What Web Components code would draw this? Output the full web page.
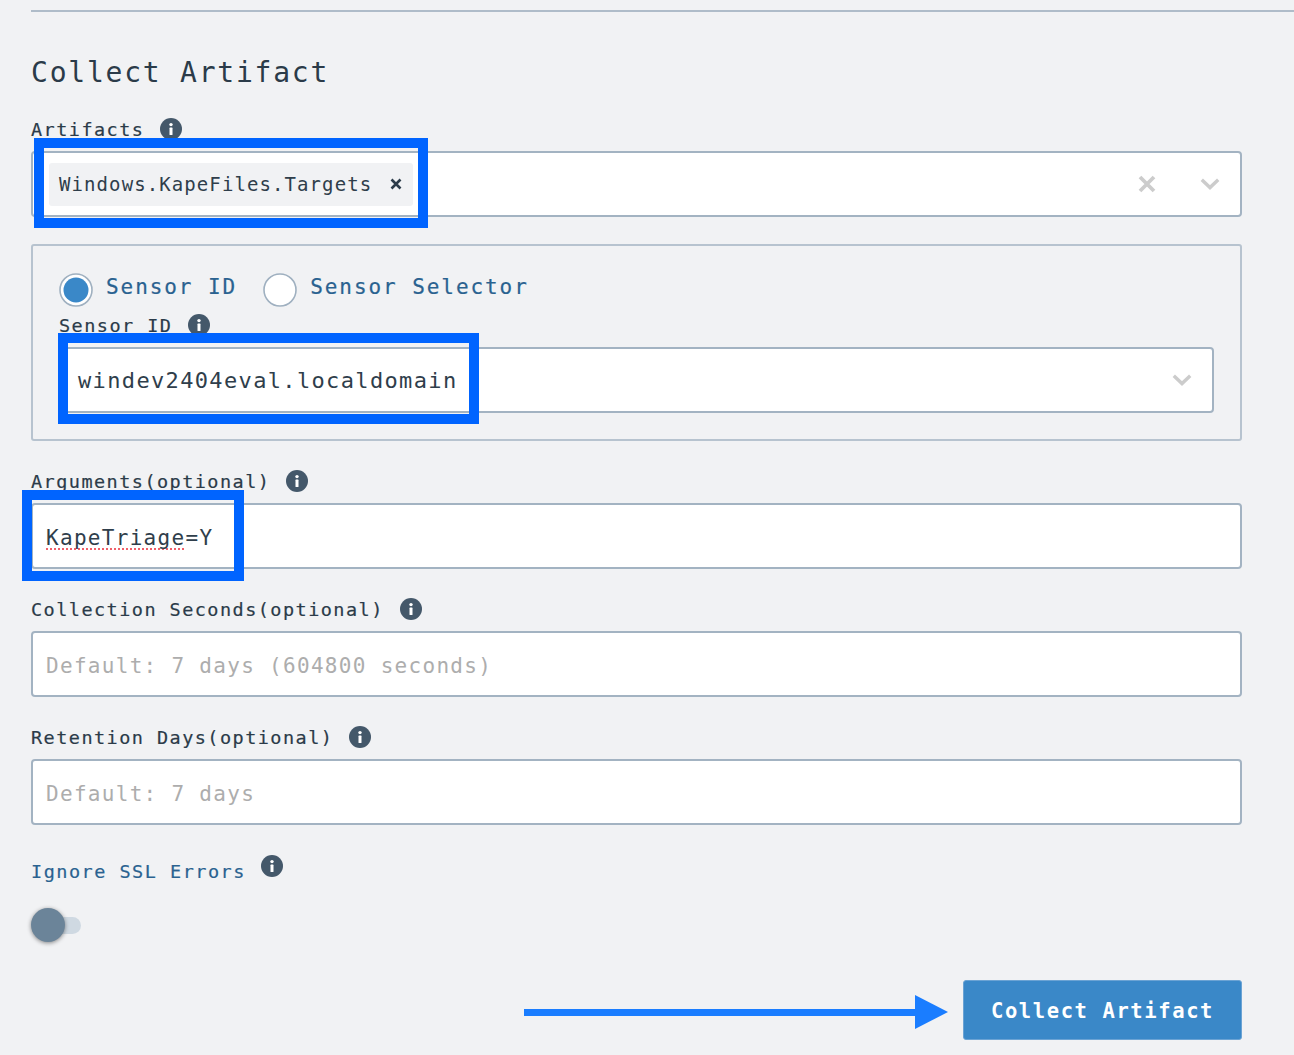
<!DOCTYPE html>
<html>
<head>
<meta charset="utf-8">
<title>Collect Artifact</title>
<style>
    html, body { margin: 0; padding: 0; background: #f1f2f4; }
    body { font-family: "DejaVu Sans Mono", "Liberation Mono", monospace; color: #2b3b49; overflow: hidden; height: 1055px; }
</style>
</head>
<body>
<collect-page>
    <form-field label="Artifacts" mark="3,-13,394,90" first>
        <text-box clear chevron style="--box-pad:16px">
            <tag-chip>Windows.KapeFiles.Targets</tag-chip>
        </text-box>
    </form-field>

    <sensor-group></sensor-group>

    <form-field label="Arguments(optional)" mark="-9,-13,222,91">
        <text-box><spell-word>KapeTriage</spell-word>=Y</text-box>
    </form-field>
    <form-field label="Collection Seconds(optional)">
        <text-box placeholder>Default: 7 days (604800 seconds)</text-box>
    </form-field>
    <form-field label="Retention Days(optional)">
        <text-box placeholder>Default: 7 days</text-box>
    </form-field>

    <ssl-toggle></ssl-toggle>
    <submit-row>Collect Artifact</submit-row>
</collect-page>

<script>
class InfoIcon extends HTMLElement {
    constructor() {
        super();
        this.attachShadow({ mode: 'open' }).innerHTML = `
            <style>
                :host { display: inline-flex; width: 22px; height: 22px; flex: none; }
                svg { display: block; }
            </style>
            <svg width="22" height="22" viewBox="0 0 22 22">
                <circle cx="11" cy="11" r="11" fill="#44586a"/>
                <circle cx="11" cy="6.6" r="1.7" fill="#fff"/>
                <rect x="9.5" y="9.6" width="3" height="7.4" rx=".6" fill="#fff"/>
            </svg>
        `;
    }
}

class TagChip extends HTMLElement {
    constructor() {
        super();
        this.attachShadow({ mode: 'open' }).innerHTML = `
            <style>
                :host {
                    display: flex;
                    align-items: center;
                    justify-content: space-between;
                    box-sizing: border-box;
                    width: 364px;
                    height: 43px;
                    padding: 0 11px 0 10px;
                    background: #f1f2f4;
                    border-radius: 3px;
                    font-size: 19px;
                    letter-spacing: 1.09px;
                    color: #2f3e4b;
                }
                svg { display: block; }
            </style>
            <slot></slot>
            <svg width="12" height="12" viewBox="0 0 12 12">
                <path d="M1.5 1.5 10.5 10.5M10.5 1.5 1.5 10.5" stroke="#2b3b49" stroke-width="2.6"/>
            </svg>
        `;
    }
}

class SpellWord extends HTMLElement {
    constructor() {
        super();
        this.attachShadow({ mode: 'open' }).innerHTML = `<style>
                :host {
                    display: inline;
                    text-decoration: underline dotted #f0606a 2px;
                    text-underline-offset: 3px;
                    text-decoration-skip-ink: none;
                }
            </style><slot></slot>`;
    }
}

class TextBox extends HTMLElement {
    connectedCallback() {
        const root = this.shadowRoot || this.attachShadow({ mode: 'open' });
        const clear = this.hasAttribute('clear') ? `
            <svg class="clear" width="18" height="18" viewBox="0 0 18 18">
                <path d="M2 2 16 16M16 2 2 16" stroke="#cccccc" stroke-width="3.8"/>
            </svg>` : '';
        const chevron = this.hasAttribute('chevron') ? `
            <svg class="chevron" width="20" height="12" viewBox="0 0 20 12">
                <path d="M1.8 1.8 10 9.6 18.2 1.8" fill="none" stroke="#cccccc" stroke-width="3.4"/>
            </svg>` : '';
        root.innerHTML = `
            <style>
                :host {
                    display: flex;
                    align-items: center;
                    box-sizing: border-box;
                    height: 66px;
                    padding: 4px 20px 0 var(--box-pad, 13px);
                    background: #fff;
                    border: 2px solid #a3b3c2;
                    border-radius: 4px;
                    font-size: 21px;
                    letter-spacing: 1.3px;
                    color: #2f3e4b;
                }
                :host([placeholder]) { color: #adadad; }
                :host([large]) { padding-top: 0; font-size: 22px; letter-spacing: 1.35px; }
                :host([clear]) { padding-top: 0; }
                .content { flex: 1; min-width: 0; white-space: nowrap; }
                .clear { margin-right: 44px; }
                svg { display: block; flex: none; }
            </style>
            <div class="content"><slot></slot></div>
            ${clear}${chevron}
        `;
    }
}

class FormField extends HTMLElement {
    connectedCallback() {
        const root = this.shadowRoot || this.attachShadow({ mode: 'open' });
        const label = this.getAttribute('label');
        const mark = this.getAttribute('mark');
        let markup = '';
        if (mark) {
            const [x, y, w, h] = mark.split(',');
            markup = `<annot-box style="left:${x}px;top:${y}px;width:${w}px;height:${h}px"></annot-box>`;
        }
        root.innerHTML = `
            <style>
                :host { display: block; }
                .label {
                    display: flex;
                    align-items: center;
                    gap: 16px;
                    box-sizing: border-box;
                    height: 22px;
                    padding-bottom: 2px;
                    margin-bottom: 10px;
                    font-size: 18.5px;
                    letter-spacing: 1.46px;
                    -webkit-text-stroke: .2px currentColor;
                    white-space: nowrap;
                    color: #2b3b49;
                }
                .box { position: relative; }
            </style>
            <div class="label">${label}<info-icon></info-icon></div>
            <div class="box"><slot></slot>${markup}</div>
        `;
    }
}

// blue rectangles someone drew over the screenshot
class AnnotBox extends HTMLElement {
    constructor() {
        super();
        this.attachShadow({ mode: 'open' }).innerHTML = `
            <style>
                :host {
                    display: block;
                    position: absolute;
                    box-sizing: border-box;
                    border: 10px solid #0064ff;
                    pointer-events: none;
                }
            </style>
        `;
    }
}

class RadioOption extends HTMLElement {
    connectedCallback() {
        const root = this.shadowRoot || this.attachShadow({ mode: 'open' });
        const dot = this.hasAttribute('checked') ? '<circle cx="17" cy="17" r="12.5" fill="#3a88c8"/>' : '';
        root.innerHTML = `
            <style>
                :host {
                    display: inline-flex;
                    align-items: center;
                    gap: 13px;
                    font-size: 21px;
                    letter-spacing: 1.93px;
                    -webkit-text-stroke: .2px currentColor;
                    color: #2a6290;
                    white-space: nowrap;
                }
                svg { display: block; flex: none; margin-top: 2px; }
                span { margin-top: -4px; }
            </style>
            <svg width="34" height="34" viewBox="0 0 34 34">
                <circle cx="17" cy="17" r="16" fill="#fff" stroke="#9fb0c0" stroke-width="1.6"/>
                ${dot}
            </svg>
            <span><slot></slot></span>
        `;
    }
}

class SensorGroup extends HTMLElement {
    constructor() {
        super();
        this.attachShadow({ mode: 'open' }).innerHTML = `
            <style>
                :host {
                    display: block;
                    box-sizing: border-box;
                    height: 197px;
                    padding: 26px 26px 0 26px;
                    border: 2px solid #b7c3cf;
                    border-radius: 3px;
                    --box-pad: 17px;
                }
                .radios {
                    display: flex;
                    gap: 26px;
                    height: 34px;
                    margin-bottom: 9px;
                }
            </style>
            <div class="radios">
                <radio-option checked>Sensor ID</radio-option>
                <radio-option>Sensor Selector</radio-option>
            </div>
            <form-field label="Sensor ID" mark="-1,-14,421,91">
                <text-box chevron large>windev2404eval.localdomain</text-box>
            </form-field>
        `;
    }
}

class SslToggle extends HTMLElement {
    constructor() {
        super();
        this.attachShadow({ mode: 'open' }).innerHTML = `
            <style>
                :host { display: block; }
                .label {
                    display: flex;
                    gap: 15px;
                    height: 32px;
                    font-size: 18.5px;
                    letter-spacing: 1.5px;
                    -webkit-text-stroke: .2px currentColor;
                    color: #2a6290;
                    white-space: nowrap;
                }
                .label span { margin-top: 6px; }
                .switch { position: relative; width: 50px; height: 36px; margin-top: 21px; }
                .track { position: absolute; left: 18px; top: 9px; width: 32px; height: 17px; border-radius: 9px; background: #cfd9e2; }
                .thumb { position: absolute; left: 0; top: 0; width: 34px; height: 34px; border-radius: 50%; background: #6b8499; box-shadow: 0 1px 4px rgba(0,0,0,.45); }
            </style>
            <div class="label"><span>Ignore SSL Errors</span><info-icon></info-icon></div>
            <div class="switch"><div class="track"></div><div class="thumb"></div></div>
        `;
    }
}

class SubmitRow extends HTMLElement {
    constructor() {
        super();
        this.attachShadow({ mode: 'open' }).innerHTML = `
            <style>
                :host { display: flex; justify-content: flex-end; align-items: center; gap: 15px; margin-top: 6px; }
                svg { display: block; margin-top: 4px; }
                button {
                    box-sizing: border-box;
                    width: 279px;
                    height: 60px;
                    padding: 2px 0 0;
                    background: #3a88c8;
                    border: 1px solid #6ba3d4;
                    border-radius: 3px;
                    font-family: inherit;
                    font-size: 20.5px;
                    font-weight: 700;
                    letter-spacing: 1.6px;
                    color: #fff;
                }
            </style>
            <svg width="424" height="34" viewBox="0 0 424 34">
                <rect x="0" y="14" width="392" height="7" fill="#1a7dff"/>
                <path d="M391 0 424 17 391 34Z" fill="#1a7dff"/>
            </svg>
            <button type="button"><slot></slot></button>
        `;
    }
}

class CollectPage extends HTMLElement {
    constructor() {
        super();
        this.attachShadow({ mode: 'open' }).innerHTML = `
            <style>
                :host { display: block; padding: 10px 52px 0 31px; }
                .rule { height: 2px; margin-right: -52px; background: #afbcc9; }
                h2 {
                    margin: 42px 0 27px;
                    height: 38px;
                    line-height: 38px;
                    font-size: 28px;
                    font-weight: 400;
                    letter-spacing: 1.77px;
                    color: #2b3b49;
                }
                .fields { display: flex; flex-direction: column; gap: 30px; }
                ::slotted([first]) { margin-bottom: -3px; }
            </style>
            <div class="rule"></div>
            <h2>Collect Artifact</h2>
            <div class="fields"><slot></slot></div>
        `;
    }
}

customElements.define('info-icon', InfoIcon);
customElements.define('tag-chip', TagChip);
customElements.define('spell-word', SpellWord);
customElements.define('text-box', TextBox);
customElements.define('annot-box', AnnotBox);
customElements.define('form-field', FormField);
customElements.define('radio-option', RadioOption);
customElements.define('sensor-group', SensorGroup);
customElements.define('ssl-toggle', SslToggle);
customElements.define('submit-row', SubmitRow);
customElements.define('collect-page', CollectPage);
</script>
</body>
</html>
